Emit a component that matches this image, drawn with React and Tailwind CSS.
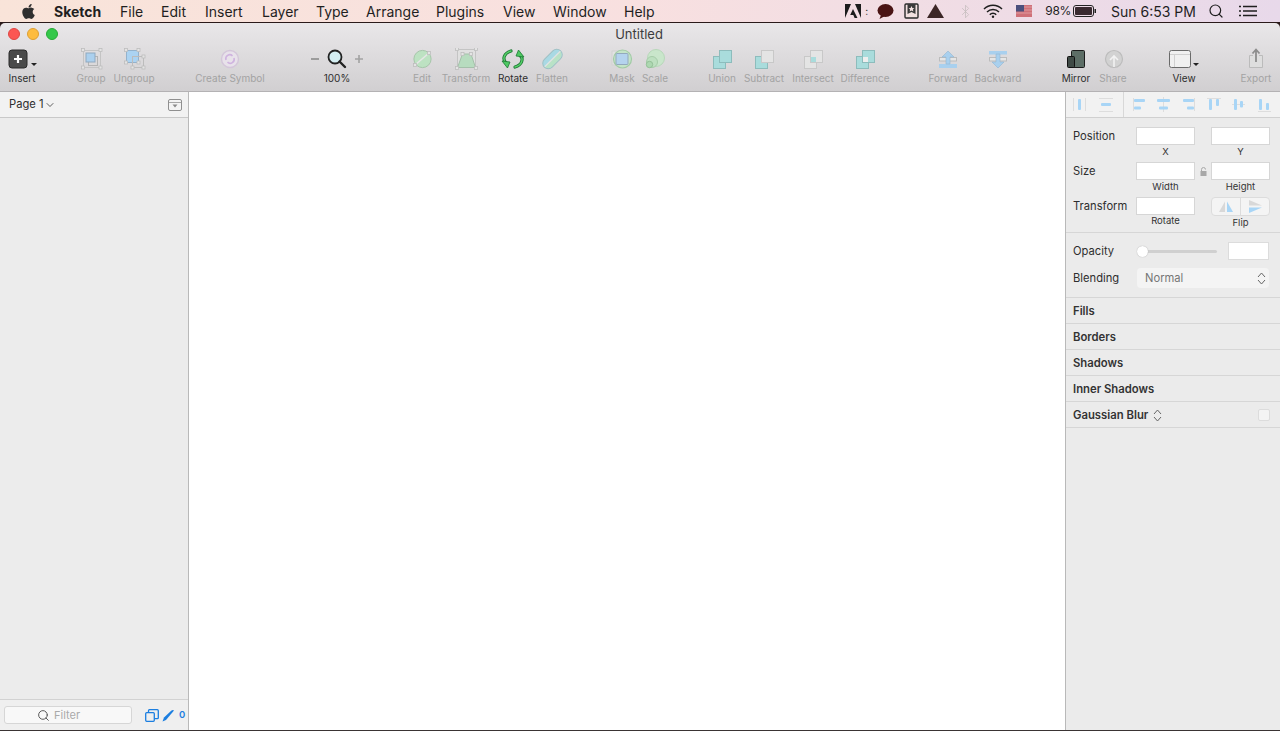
import { FaApple } from 'react-icons/fa';
import { Search, ChevronDown, Bluetooth } from 'lucide-react';

const FONT = 'font-["Inter","Noto_Sans",sans-serif]';

// svg centred on the tool, x relative to centre, y from the top of the icon row
function Ico({ w = 44, children }) {
  return (
    <svg width={w} height="24" viewBox={`${-w / 2} 0 ${w} 24`} className="shrink-0 block">
      {children}
    </svg>
  );
}

function Handles({ pts }) {
  return pts.map(([x, y], i) => (
    <rect key={i} x={x - 1.5} y={y - 1.5} width="3" height="3" fill="#e4e4e4" stroke="#bdbdbd" strokeWidth="0.8" />
  ));
}

function Tool({ label, on, className, children }) {
  return (
    <div className={`flex flex-col items-center shrink-0 ${className}`}>
      {children}
      <span className={`whitespace-nowrap text-[10px] leading-[12px] ${on ? 'text-[#2e2e2e]' : 'text-[#a3a3a3]'}`}>
        {label}
      </span>
    </div>
  );
}

function BoolIcon({ a, b, overlap, dx = 0 }) {
  return (
    <Ico>
      <g transform={`translate(${dx} 0)`}>
        <rect x="-8.5" y="8.5" width="12" height="12" fill={a} stroke={a === '#a9dcdc' ? '#8dbcbc' : '#c8c8c8'} />
        <rect x="-2.5" y="2.5" width="12" height="12" fill={b} stroke={b === '#a9dcdc' ? '#8dbcbc' : '#c8c8c8'} />
        {overlap && <rect x="-2" y="9" width="5" height="5" fill={overlap} />}
      </g>
    </Ico>
  );
}

function Toolbar() {
  return (
    <div className="h-[69px] shrink-0 border-b border-[#b4b2b4] bg-gradient-to-b from-[#e9e7e9] to-[#d1cfd1] rounded-t-[5px]">
      <div className="h-[24px] pr-[2px] relative flex items-center justify-center text-[13px] text-[#3c3c3c]">
        <div className="absolute left-[8px] top-[5px] flex gap-[7px]">
          <span className="w-[12px] h-[12px] rounded-full bg-[#fc5753] border border-[#df4744]" />
          <span className="w-[12px] h-[12px] rounded-full bg-[#fdbc40] border border-[#de9f34]" />
          <span className="w-[12px] h-[12px] rounded-full bg-[#34c84a] border border-[#27aa35]" />
        </div>
        Untitled
      </div>
      <div className="flex pl-[4px] pt-[1px]">
        <Tool label="Insert" on className="w-[36px]">
          <Ico>
            <rect x="-13" y="2" width="18" height="18" rx="3" fill="#4a4a4a" stroke="#2a2a2a" />
            <path d="M-4 7v8M-8 11h8" stroke="#fff" strokeWidth="2.2" />
            <path d="M9 15h6l-3 3z" fill="#222" />
          </Ico>
        </Tool>
        <Tool label="Group" className="w-[36px] ml-[33px]">
          <Ico>
            <rect x="-7.5" y="2.5" width="17" height="17" fill="none" stroke="#c4c4c4" />
            <rect x="-2.5" y="8.5" width="9" height="9" fill="none" stroke="#b4b4b4" />
            <rect x="-5" y="5" width="9" height="9" fill="#abd0ee" stroke="#8fa9c0" />
            <Handles pts={[[-8, 2], [9.5, 2], [-8, 19.5], [9.5, 19.5]]} />
          </Ico>
        </Tool>
        <Tool label="Ungroup" className="w-[46px] ml-[2px]">
          <Ico>
            <rect x="-7.5" y="2.5" width="12" height="12" fill="#abd3f2" stroke="#94b2cc" />
            <rect x="-1.5" y="8.5" width="11" height="11" fill="none" stroke="#bcbcbc" />
            <Handles pts={[[-8, 2], [4.5, 2], [-8, 14.5], [4.5, 14.5], [-1.5, 19.5], [9.5, 19.5], [9.5, 8.5]]} />
          </Ico>
        </Tool>
        <Tool label="Create Symbol" className="w-[76px] ml-[35px]">
          <Ico>
            <circle cx="0" cy="11" r="8.5" fill="#e8e2ea" stroke="#d4c6da" strokeWidth="1.4" />
            <path d="M-4 12a4 4 0 0 1 6.5-4.2M4 10a4 4 0 0 1-6.5 4.2" fill="none" stroke="#cfb3df" strokeWidth="1.6" />
          </Ico>
        </Tool>
        <Tool label="100%" on className="w-[60px] ml-[39px]">
          <Ico w={60}>
            <path d="M-26 11h8" stroke="#8c8c8c" strokeWidth="1.6" />
            <path d="M18 11h8M22 7v8" stroke="#a2a2a2" strokeWidth="1.6" />
            <circle cx="-2" cy="9" r="6.5" fill="#d4eef2" stroke="#222" strokeWidth="1.8" />
            <path d="M2.5 13.5L8 19" stroke="#222" strokeWidth="2.4" strokeLinecap="round" />
          </Ico>
        </Tool>
        <Tool label="Edit" className="w-[30px] ml-[40px]">
          <Ico>
            <circle cx="0.5" cy="11" r="8.6" fill="#bde2c2" stroke="#a6c6aa" />
            <path d="M-7 17L7 5" stroke="#e6e6e6" strokeWidth="1.6" />
            <Handles pts={[[-7, 17], [7, 5]]} />
          </Ico>
        </Tool>
        <Tool label="Transform" className="w-[54px] ml-[2px]">
          <Ico>
            <rect x="-8.5" y="1.5" width="18" height="18" fill="#e0e0e0" stroke="#c4c4c4" />
            <path d="M-3.5 6H5L9.5 19.5H-8.5z" fill="#b7dcbf" stroke="#a4c0aa" />
            <Handles pts={[[-9, 1], [10, 1], [-9, 20], [10, 20], [-3.5, 6], [5, 6]]} />
          </Ico>
        </Tool>
        <Tool label="Rotate" on className="w-[34px] ml-[3px]">
          <Ico>
            <g fill="none" strokeLinecap="round">
              <path d="M-2 3C-9 5 -11 11 -7 15" stroke="#1d7a35" strokeWidth="3.2" />
              <path d="M2 19C9 17 11 11 7 7" stroke="#1d7a35" strokeWidth="3.2" />
              <path d="M-2 3C-9 5 -11 11 -7 15" stroke="#57d06a" strokeWidth="1.4" />
              <path d="M2 19C9 17 11 11 7 7" stroke="#57d06a" strokeWidth="1.4" />
            </g>
            <path d="M-11 13L-3 14L-5.5 20z" fill="#4ec963" stroke="#1d7a35" strokeWidth="0.8" />
            <path d="M11 9L3 8L5.5 2z" fill="#4ec963" stroke="#1d7a35" strokeWidth="0.8" />
          </Ico>
        </Tool>
        <Tool label="Flatten" className="w-[38px] ml-[3px]">
          <Ico>
            <g transform="translate(0.5 11) rotate(-45)">
              <rect x="-11.5" y="-5.5" width="23" height="11" rx="5.5" fill="#a9d9e4" stroke="#9fc0c4" />
              <path d="M-11 0A5.5 5.5 0 0 0 -5.5 5H5.5A5.5 5.5 0 0 0 11 0z" fill="#b9e2c6" />
              <path d="M-11 0H11" stroke="#e2e2e2" strokeWidth="1.2" />
            </g>
          </Ico>
        </Tool>
        <Tool label="Mask" className="w-[30px] ml-[36px]">
          <Ico>
            <rect x="-10" y="3" width="9" height="14" fill="#e2e2e2" stroke="#d2d2d2" />
            <circle cx="0.5" cy="11" r="9" fill="#c4e4c8" stroke="#a2cba6" strokeWidth="1.2" />
            <rect x="-6" y="5.5" width="12" height="11" rx="1" fill="#b4d3ee" stroke="#93a9bd" />
          </Ico>
        </Tool>
        <Tool label="Scale" className="w-[30px] ml-[3px]">
          <Ico>
            <circle cx="1" cy="10" r="8.5" fill="#c9e6cb" stroke="#b8d8ba" />
            <circle cx="-3" cy="14" r="5.5" fill="#bde0c0" stroke="#a6cca9" />
            <circle cx="-5.5" cy="16.5" r="3.2" fill="#add8b1" stroke="#94c098" />
          </Ico>
        </Tool>
        <Tool label="Union" className="w-[32px] ml-[36px]">
          <BoolIcon a="#a9dcdc" b="#a9dcdc" overlap="#a9dcdc" />
        </Tool>
        <Tool label="Subtract" className="w-[44px] ml-[4px]">
          <BoolIcon a="#a9dcdc" b="#e4e4e4" />
        </Tool>
        <Tool label="Intersect" className="w-[46px] ml-[4px]">
          <BoolIcon a="#e4e4e4" b="#e4e4e4" overlap="#a9dcdc" />
        </Tool>
        <Tool label="Difference" className="w-[52px] ml-[3px]">
          <BoolIcon a="#a9dcdc" b="#a9dcdc" overlap="#eeeeee" />
        </Tool>
        <Tool label="Forward" className="w-[44px] ml-[35px]">
          <Ico>
            <rect x="-8.5" y="9.5" width="17" height="3.5" fill="#e6e6e6" stroke="#bcbcbc" />
            <rect x="-9" y="16" width="18" height="4" fill="#a9d0ee" />
            <path d="M0 3L6 9H2V16H-2V9H-6z" fill="#a9d0ee" stroke="#94b6d0" strokeWidth="0.6" />
          </Ico>
        </Tool>
        <Tool label="Backward" className="w-[50px] ml-[3px]">
          <Ico>
            <rect x="-9" y="3" width="18" height="3.5" fill="#a9d0ee" />
            <rect x="-8.5" y="9.5" width="17" height="3.5" fill="#e6e6e6" stroke="#bcbcbc" />
            <path d="M0 20L6 14H2V6H-2V14H-6z" fill="#a9d0ee" stroke="#94b6d0" strokeWidth="0.6" />
          </Ico>
        </Tool>
        <Tool label="Mirror" on className="w-[32px] ml-[37px]">
          <Ico>
            <rect x="-4.5" y="2.5" width="13" height="17" rx="1" fill="#5d6e66" stroke="#1c1c1c" />
            <rect x="-8.5" y="8.5" width="7" height="11" rx="1" fill="#3f4a45" stroke="#111" />
          </Ico>
        </Tool>
        <Tool label="Share" className="w-[32px] ml-[5px]">
          <Ico>
            <circle cx="1" cy="11" r="8.5" fill="#d2d2d2" stroke="#bcbcbc" strokeWidth="1.2" />
            <path d="M1 19V9M-3 12L1 8L5 12" fill="none" stroke="#f2f2f2" strokeWidth="1.6" />
          </Ico>
        </Tool>
        <Tool label="View" on className="w-[40px] ml-[35px]">
          <Ico>
            <rect x="-14.5" y="2.5" width="21" height="17" rx="2" fill="#f0f0f0" stroke="#6a6a6a" />
            <path d="M-14 6.5H6M-9.5 7V19" stroke="#d0d0d0" />
            <path d="M9 15h6l-3 3z" fill="#222" />
          </Ico>
        </Tool>
        <Tool label="Export" className="w-[36px] ml-[34px]">
          <Ico>
            <path d="M-3 7.5H-6.5V19.5H6.5V7.5H3" fill="#dedede" stroke="#bbb" />
            <path d="M0 14V2M-3.5 5.5L0 1.5L3.5 5.5" fill="none" stroke="#8d8d8d" strokeWidth="1.8" />
          </Ico>
        </Tool>
      </div>
    </div>
  );
}

function AlignIcon({ cx, className = '', children }) {
  return (
    <svg width="24" height="25" viewBox={`${cx - 12} 92 24 25`} className={`shrink-0 block ${className}`}>
      {children}
    </svg>
  );
}

function AlignRow() {
  const blue = '#a8d5f6';
  const gray = '#dddddd';
  return (
    <div className="h-[26px] shrink-0 flex border-b border-[#d0d0d0] bg-[#f2f2f2]">
      <div className="w-[58px] flex pl-[1px] gap-[3px] border-r border-[#d8d8d8]">
        <AlignIcon cx={1079}>
          <path d="M1073.5 98v13M1085.5 98v13" stroke={gray} />
          <rect x="1078" y="99" width="3" height="11" rx="1" fill={blue} />
        </AlignIcon>
        <AlignIcon cx={1106}>
          <path d="M1099 98.5h14M1099 111.5h14" stroke={gray} />
          <rect x="1101" y="103" width="10" height="3" rx="1" fill={blue} />
        </AlignIcon>
      </div>
      <div className="flex pl-[4px]">
        <AlignIcon cx={1140}>
          <path d="M1133.5 98v13" stroke={gray} />
          <rect x="1134" y="99" width="11" height="3" rx="1" fill={blue} />
          <rect x="1134" y="106.5" width="7" height="3" rx="1" fill={blue} />
        </AlignIcon>
        <AlignIcon cx={1164}>
          <path d="M1163.5 97v15" stroke={gray} />
          <rect x="1157" y="99" width="13" height="3" rx="1" fill={blue} />
          <rect x="1159" y="106.5" width="9" height="3" rx="1" fill={blue} />
        </AlignIcon>
        <AlignIcon cx={1189} className="ml-[1px]">
          <path d="M1194.5 98v13" stroke={gray} />
          <rect x="1183" y="99" width="11" height="3" rx="1" fill={blue} />
          <rect x="1187" y="106.5" width="7" height="3" rx="1" fill={blue} />
        </AlignIcon>
        <AlignIcon cx={1213}>
          <path d="M1207 98.5h14" stroke={gray} />
          <rect x="1209" y="99" width="3" height="11" rx="1" fill={blue} />
          <rect x="1216" y="99" width="3" height="7" rx="1" fill={blue} />
        </AlignIcon>
        <AlignIcon cx={1238} className="ml-[1px]">
          <path d="M1232 104.5h13" stroke={gray} />
          <rect x="1234" y="99" width="3" height="11" rx="1" fill={blue} />
          <rect x="1240" y="101" width="3" height="6.5" rx="1" fill={blue} />
        </AlignIcon>
        <AlignIcon cx={1263} className="ml-[1px]">
          <path d="M1258 111.5h13" stroke={gray} />
          <rect x="1259" y="99" width="3" height="11" rx="1" fill={blue} />
          <rect x="1266" y="103" width="3" height="7" rx="1" fill={blue} />
        </AlignIcon>
      </div>
    </div>
  );
}

function Field({ label, labelClass = 'mt-[1px]' }) {
  return (
    <div className="w-[59px] flex flex-col items-center shrink-0">
      <div className="w-full h-[18px] bg-white border border-[#d6d6d6]" />
      <span className={`text-[9.5px] leading-[12px] text-[#333] ${labelClass}`}>{label}</span>
    </div>
  );
}

function SectionRow({ children, right }) {
  return (
    <div className="h-[26px] flex items-center justify-between pl-[7px] pr-[10px] border-b border-[#d6d6d6] text-[11.3px] font-semibold text-[#333]">
      <span className="pt-[2px]">{children}</span>
      {right}
    </div>
  );
}

function Stepper({ className }) {
  return (
    <svg width="9" height="15" viewBox="0 0 9 15" className={className}>
      <path d="M1 6l3.5-4 3.5 4M1 9l3.5 4 3.5-4" fill="none" stroke="#666" strokeWidth="1" />
    </svg>
  );
}

function Inspector() {
  return (
    <div className="w-[215px] shrink-0 border-l border-[#b9b9b9] bg-[#ebebeb] flex flex-col text-[#2e2e2e]">
      <AlignRow />
      <div className="h-[115px] pt-[9px] pl-[7px] border-b border-[#d6d6d6] text-[11.2px]">
        <div className="h-[35px] flex">
          <span className="w-[63px] h-[18px] leading-[18px]">Position</span>
          <Field label="X" />
          <span className="w-[16px]" />
          <Field label="Y" />
        </div>
        <div className="h-[35px] flex">
          <span className="w-[63px] h-[18px] leading-[18px]">Size</span>
          <Field label="Width" />
          <span className="w-[16px] h-[18px] flex items-center justify-center">
            <svg width="7" height="9" viewBox="0 0 7 9">
              <path d="M1.5 4V2.5a2 2 0 0 1 4 0" fill="none" stroke="#a8a8a8" />
              <rect x="0.5" y="4" width="6" height="5" fill="#a8a8a8" />
            </svg>
          </span>
          <Field label="Height" />
        </div>
        <div className="h-[35px] flex">
          <span className="w-[63px] h-[18px] leading-[18px]">Transform</span>
          <Field label="Rotate" labelClass="mt-0" />
          <span className="w-[16px]" />
          <div className="w-[59px] flex flex-col items-center">
            <div className="w-full h-[19px] flex rounded-[4px] bg-[#f4f4f4] border border-[#dcdcdc]">
              <span className="flex-1 border-r border-[#dcdcdc] flex items-center justify-center">
                <svg width="16" height="13" viewBox="0 0 16 13">
                  <path d="M7 1.5V12H1z" fill="#d8d8d8" />
                  <path d="M9 1.5V12H15z" fill="#a8d5f6" />
                </svg>
              </span>
              <span className="flex-1 flex items-center justify-center">
                <svg width="16" height="13" viewBox="0 0 16 13">
                  <path d="M2 5.5V0L15 5.5z" fill="#d8d8d8" />
                  <path d="M2 7.5V13L15 7.5z" fill="#a8d5f6" />
                </svg>
              </span>
            </div>
            <span className="text-[9.5px] leading-[12px] mt-[1px] text-[#333]">Flip</span>
          </div>
        </div>
      </div>
      <div className="h-[65px] pt-[9px] pl-[7px] pr-[10px] border-b border-[#d6d6d6] text-[11.2px]">
        <div className="h-[18px] flex items-center">
          <span className="w-[64px] pt-[1px]">Opacity</span>
          <div className="relative w-[80px] h-[3px] rounded-full bg-[#d0d0d0]">
            <span className="absolute left-0 -top-[4px] w-[11px] h-[11px] rounded-full bg-white shadow-[0_0_1px_#999]" />
          </div>
          <div className="ml-[11px] w-[41px] h-[18px] bg-white border border-[#dcdcdc]" />
        </div>
        <div className="h-[20px] mt-[8px] flex items-center">
          <span className="w-[64px] pt-[1px]">Blending</span>
          <div className="w-[132px] h-[20px] rounded-[4px] bg-[#f4f4f4] flex items-center justify-between pl-[8px] pr-[3px] text-[#767676]">
            <span className="pt-[1px]">Normal</span>
            <Stepper />
          </div>
        </div>
      </div>
      <SectionRow>Fills</SectionRow>
      <SectionRow>Borders</SectionRow>
      <SectionRow>Shadows</SectionRow>
      <SectionRow>Inner Shadows</SectionRow>
      <SectionRow right={<span className="w-[12px] h-[12px] rounded-[2px] bg-[#f4f4f4] border border-[#dcdcdc]" />}>
        <span className="flex items-center gap-[5px]">
          Gaussian Blur
          <Stepper />
        </span>
      </SectionRow>
    </div>
  );
}

function Sidebar() {
  return (
    <div className="w-[189px] shrink-0 border-r border-[#b9b9b9] bg-[#ececec] flex flex-col">
      <div className="h-[26px] shrink-0 bg-[#f2f2f2] border-b border-[#c9c9c9] flex items-center pl-[9px] pr-[6px] text-[11.2px] text-[#2e2e2e]">
        Page 1
        <ChevronDown size={12} strokeWidth={1.5} />
        <svg width="14" height="12" viewBox="0 0 14 12" className="ml-auto">
          <rect x="0.5" y="0.5" width="13" height="11" rx="1.5" fill="#f4f4f4" stroke="#8f8f8f" />
          <path d="M1 3.5h12" stroke="#a8a8a8" />
          <path d="M4.5 5.5h5L7 8.5z" fill="#8a8a8a" />
        </svg>
      </div>
      <div className="flex-1" />
      <div className="h-[31px] shrink-0 bg-[#efefef] border-t border-[#d2d2d2] flex items-center pl-[4px]">
        <div className="w-[128px] h-[18px] bg-[#f8f8f8] border border-[#d6d6d6] rounded-[3px] flex items-center pl-[32px] gap-[4px] text-[11px] text-[#aaa]">
          <Search size={13} strokeWidth={1.8} className="text-[#555]" />
          <span className="pt-[1px]">Filter</span>
        </div>
        <svg width="14" height="13" viewBox="0 0 14 13" className="ml-[13px]">
          <rect x="0.7" y="3.7" width="8.6" height="8.6" rx="1" fill="none" stroke="#1b7ee0" strokeWidth="1.3" />
          <path d="M3.5 3.5V1.7a1 1 0 0 1 1-1h7.8a1 1 0 0 1 1 1v7a1 1 0 0 1-1 1H9.5" fill="none" stroke="#1b7ee0" strokeWidth="1.3" />
        </svg>
        <svg width="13" height="13" viewBox="0 0 13 13" className="ml-[3px]">
          <path d="M0.5 12.5L2 8.5L9.5 1.5Q11 0.5 12 1.5L4 11z" fill="#1b7ee0" />
        </svg>
        <span className="ml-[4px] text-[9.5px] font-semibold text-[#1b7ee0]">0</span>
      </div>
    </div>
  );
}

function MenuBar() {
  return (
    <div className="h-[22px] shrink-0 flex items-center bg-gradient-to-r from-[#f9e4d9] via-[#f8e0e0] to-[#e8d9ea] text-[14px] text-[#1f1f1f]">
      <span className="w-[54px] pl-[20px] shrink-0">
        <FaApple size={17} className="text-[#2f2f2f]" />
      </span>
      <span className="w-[66px] font-bold">Sketch</span>
      <span className="w-[41px]">File</span>
      <span className="w-[44px]">Edit</span>
      <span className="w-[57px]">Insert</span>
      <span className="w-[54px]">Layer</span>
      <span className="w-[50px]">Type</span>
      <span className="w-[70px]">Arrange</span>
      <span className="w-[67px]">Plugins</span>
      <span className="w-[50px]">View</span>
      <span className="w-[71px]">Window</span>
      <span>Help</span>
      <div className="ml-auto flex items-center pr-[23px]">
        <svg width="16" height="14" viewBox="0 0 16 14">
          <path d="M0 0H6L0 14zM10 0H16V14zM8 5L12.5 14H9.6L8.3 11H5.2z" fill="#1c1c1c" />
        </svg>
        <span className="w-[8px] ml-[4px] text-[10px] leading-none text-[#333]">:</span>
        <svg width="17" height="15" viewBox="0 0 17 15" className="ml-[4px]">
          <ellipse cx="8.5" cy="6.5" rx="8" ry="6.5" fill="#4a1414" />
          <path d="M4 11L2.5 15L8 12z" fill="#4a1414" />
        </svg>
        <svg width="15" height="16" viewBox="0 0 15 16" className="ml-[10px]">
          <rect x="1" y="1" width="13" height="14" rx="1" fill="#f2e0e0" stroke="#2a2a2a" strokeWidth="1.4" />
          <path d="M3.5 1V11L7.5 9L11.5 11V1z" fill="#3a3a3a" />
          <path d="M7.5 3l.9 2 2 .2-1.5 1.3.5 2-1.9-1-1.9 1 .5-2L4.6 5.2l2-.2z" fill="#f2e0e0" />
        </svg>
        <svg width="17" height="14" viewBox="0 0 17 14" className="ml-[8px]">
          <path d="M8.5 0L17 14H0z" fill="#3c2626" />
        </svg>
        <Bluetooth size={15} strokeWidth={1.2} className="ml-[14px] text-[#c4bcbc]" />
        <svg width="20" height="14" viewBox="0 0 20 14" className="ml-[10px]">
          <path d="M1 5a12.5 12.5 0 0 1 18 0M4 8a8.3 8.3 0 0 1 12 0M6.8 10.8a4.2 4.2 0 0 1 6.4 0" fill="none" stroke="#1f1f1f" strokeWidth="1.5" />
          <circle cx="10" cy="12.8" r="1.2" fill="#1f1f1f" />
        </svg>
        <svg width="16" height="12" viewBox="0 0 16 12" className="ml-[13px]">
          <rect width="16" height="12" fill="#cf7078" />
          <path d="M0 2h16M0 5h16M0 8h16" stroke="#e2a5a8" strokeWidth="0.8" />
          <rect width="8" height="6.5" fill="#4b4f7c" />
        </svg>
        <span className="ml-[13px] text-[12px] tracking-tight">98%</span>
        <svg width="23" height="12" viewBox="0 0 23 12" className="ml-[2px]">
          <rect x="0.5" y="0.5" width="20" height="11" rx="2.5" fill="none" stroke="#222" />
          <rect x="2" y="2" width="17" height="8" rx="1" fill="#3a2a30" />
          <rect x="21.5" y="4" width="1.5" height="4" fill="#222" />
        </svg>
        <span className="ml-[15px] text-[14px] w-[82px] whitespace-nowrap">Sun 6:53 PM</span>
        <Search size={16} strokeWidth={1.8} className="ml-[15px]" />
        <svg width="18" height="12" viewBox="0 0 18 12" className="ml-[15px]">
          <path d="M4 1.5h14M4 6h14M4 10.5h14" stroke="#1f1f1f" strokeWidth="1.6" />
          <path d="M0 1.5h2M0 6h2M0 10.5h2" stroke="#1f1f1f" strokeWidth="1.6" />
        </svg>
      </div>
    </div>
  );
}

export default function App() {
  return (
    <div className={`w-[1280px] h-[731px] overflow-hidden flex flex-col bg-[#2a1a1a] ${FONT}`}>
      <MenuBar />
      <div className="h-[1px] shrink-0 bg-[#2a1a1a]" />
      <Toolbar />
      <div className="flex-1 min-h-0 flex">
        <Sidebar />
        <div className="flex-1 bg-white" />
        <Inspector />
      </div>
      <div className="h-[1px] shrink-0 bg-[#3a3434]" />
    </div>
  );
}
